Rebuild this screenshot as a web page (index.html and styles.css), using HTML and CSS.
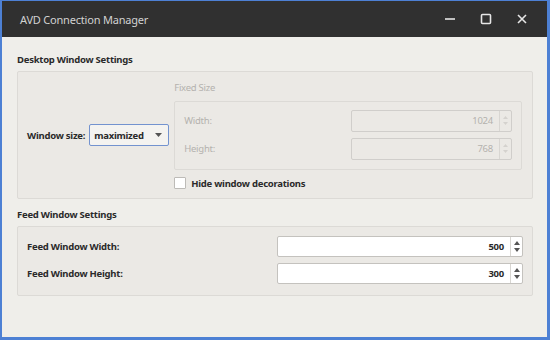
FILE: index.html
```html
<!DOCTYPE html>
<html>
<head>
  <meta charset="UTF-8">
  <title>AVD Connection Manager</title>
  <link rel="stylesheet" href="styles.css">
</head>
<body>
  <div class="window">
    <!-- Title bar -->
    <div class="titlebar">
      <span class="title">AVD Connection Manager</span>
      <div class="controls">
        <svg class="ctl" width="12" height="12" viewBox="0 0 12 12"><path d="M1 6h10" stroke="#e6e6e6" stroke-width="1.6"/></svg>
        <svg class="ctl" width="12" height="12" viewBox="0 0 12 12"><rect x="1.5" y="1.5" width="9" height="9" rx="1" fill="none" stroke="#e6e6e6" stroke-width="1.6"/></svg>
        <svg class="ctl" width="12" height="12" viewBox="0 0 12 12"><path d="M2 2l8 8M10 2l-8 8" stroke="#e6e6e6" stroke-width="1.6"/></svg>
      </div>
    </div>

    <div class="content">
      <!-- Desktop window settings -->
      <div class="section-title">Desktop Window Settings</div>
      <div class="group desktop-group">
        <div class="size-row">
          <label class="label">Window size:</label>
          <div class="combo">
            <span>maximized</span>
            <svg width="7" height="4" viewBox="0 0 7 4"><path d="M0 0h7L3.5 4z" fill="#555"/></svg>
          </div>
        </div>
        <div class="fixed-col">
          <div class="fixed-title">Fixed Size</div>
          <div class="inner-group">
            <div class="row">
              <span class="label disabled">Width:</span>
              <div class="spin spin-disabled">
                <span class="spin-value">1024</span>
                <div class="spin-btns">
                  <svg width="5" height="3" viewBox="0 0 5 3"><path d="M0 3L2.5 0L5 3z" fill="#d4d2ce"/></svg>
                  <svg width="5" height="3" viewBox="0 0 5 3"><path d="M0 0h5L2.5 3z" fill="#d4d2ce"/></svg>
                </div>
              </div>
            </div>
            <div class="row">
              <span class="label disabled">Height:</span>
              <div class="spin spin-disabled">
                <span class="spin-value">768</span>
                <div class="spin-btns">
                  <svg width="5" height="3" viewBox="0 0 5 3"><path d="M0 3L2.5 0L5 3z" fill="#d4d2ce"/></svg>
                  <svg width="5" height="3" viewBox="0 0 5 3"><path d="M0 0h5L2.5 3z" fill="#d4d2ce"/></svg>
                </div>
              </div>
            </div>
          </div>
          <div class="check-row">
            <span class="checkbox"></span>
            <span class="label">Hide window decorations</span>
          </div>
        </div>
      </div>

      <!-- Feed window settings -->
      <div class="section-title feed-title">Feed Window Settings</div>
      <div class="group feed-group">
        <div class="row">
          <span class="label">Feed Window Width:</span>
          <div class="spin spin-wide">
            <span class="spin-value">500</span>
            <div class="spin-btns">
              <svg width="6" height="4" viewBox="0 0 6 4"><path d="M0 4L3 0L6 4z" fill="#555"/></svg>
              <svg width="6" height="4" viewBox="0 0 6 4"><path d="M0 0h6L3 4z" fill="#555"/></svg>
            </div>
          </div>
        </div>
        <div class="row">
          <span class="label">Feed Window Height:</span>
          <div class="spin spin-wide">
            <span class="spin-value">300</span>
            <div class="spin-btns">
              <svg width="6" height="4" viewBox="0 0 6 4"><path d="M0 4L3 0L6 4z" fill="#555"/></svg>
              <svg width="6" height="4" viewBox="0 0 6 4"><path d="M0 0h6L3 4z" fill="#555"/></svg>
            </div>
          </div>
        </div>
      </div>
    </div>
  </div>
</body>
</html>
```

FILE: styles.css
```css
:root {
  --frame: #4d80d4;
  --titlebar: #303030;
  --background: #efeeea;
  --group: #ebe9e5;
  --group-border: #dcdad6;
  --field-border: #c4c2be;
  --foreground: #2a2a2a;
  --disabled: #b4b2ae;
}

html, body {
  margin: 0;
  padding: 0;
}

body {
  width: 550px;
  height: 340px;
  font-family: "Noto Sans", "DejaVu Sans", sans-serif;
  font-size: 9.5px;
  letter-spacing: -0.25px;
  color: var(--foreground);
  background-color: var(--frame);
}

.window {
  box-sizing: border-box;
  width: 550px;
  height: 340px;
  border: 2px solid var(--frame);
  border-top-width: 1px;
  border-right-width: 3px;
  border-bottom-width: 3px;
  display: flex;
  flex-direction: column;
  background-color: var(--background);
}

/* Title bar */
.titlebar {
  height: 36px;
  flex: 0 0 36px;
  background-color: var(--titlebar);
  display: flex;
  align-items: center;
  justify-content: space-between;
  padding: 0 19px 0 18px;
}

.title {
  color: #d2d2d2;
  font-size: 11px;
  letter-spacing: -0.2px;
}

.controls {
  display: flex;
  gap: 24px;
  align-items: center;
}

.ctl {
  display: block;
}

/* Content */
.content {
  flex: 1;
  padding: 16px 14px 0 15px;
}

.section-title {
  font-weight: 700;
  height: 14px;
  line-height: 14px;
  margin-bottom: 4px;
}

.feed-title {
  margin-top: 9px;
  margin-bottom: 4px;
}

.group {
  background-color: var(--group);
  border: 1px solid var(--group-border);
  border-radius: 2px;
}

.label {
  font-weight: 700;
  white-space: nowrap;
}

.label.disabled {
  color: var(--disabled);
  font-weight: 400;
}

/* Desktop group */
.desktop-group {
  display: flex;
  align-items: center;
  height: 128px;
  box-sizing: border-box;
  padding: 9px 10px 9px 9px;
  gap: 5px;
}

.size-row {
  display: flex;
  align-items: center;
  gap: 4px;
}

.combo {
  box-sizing: border-box;
  width: 80px;
  height: 22px;
  border: 1px solid #7393cf;
  border-radius: 2px;
  background-color: #f4f3f0;
  display: flex;
  align-items: center;
  justify-content: space-between;
  padding: 0 6px 0 4px;
  font-weight: 700;
}

.fixed-col {
  flex: 1;
  display: flex;
  flex-direction: column;
}

.fixed-title {
  color: var(--disabled);
  height: 14px;
  line-height: 14px;
  margin-bottom: 6px;
}

.inner-group {
  box-sizing: border-box;
  height: 69px;
  border: 1px solid var(--group-border);
  border-radius: 2px;
  padding: 8px 9px 0 9px;
  display: flex;
  flex-direction: column;
  gap: 6px;
}

.row {
  display: flex;
  align-items: center;
  justify-content: space-between;
}

.check-row {
  display: flex;
  align-items: center;
  gap: 5px;
  margin-top: 7px;
}

.checkbox {
  box-sizing: border-box;
  width: 12px;
  height: 12px;
  background-color: #ffffff;
  border: 1px solid #bdbbb7;
  border-radius: 1px;
}

/* Spin boxes */
.spin {
  box-sizing: border-box;
  height: 22px;
  display: flex;
  border: 1px solid var(--field-border);
  border-radius: 2px;
  background-color: #ffffff;
}

.spin-value {
  flex: 1;
  text-align: right;
  align-self: center;
  padding-right: 6px;
}

.spin-btns {
  width: 11px;
  border-left: 1px solid #d8d6d2;
  display: flex;
  flex-direction: column;
  align-items: center;
  justify-content: center;
  gap: 3px;
}

.spin-btns svg {
  display: block;
}

.spin-disabled {
  width: 161px;
  background-color: #ebe9e5;
  border-color: #d0cecb;
  color: var(--disabled);
}

.spin-wide {
  width: 246px;
  height: 21px;
  font-weight: 700;
}

/* Feed group */
.feed-group {
  box-sizing: border-box;
  height: 70px;
  padding: 9px 9px 0 9px;
  display: flex;
  flex-direction: column;
  gap: 6px;
}
```
